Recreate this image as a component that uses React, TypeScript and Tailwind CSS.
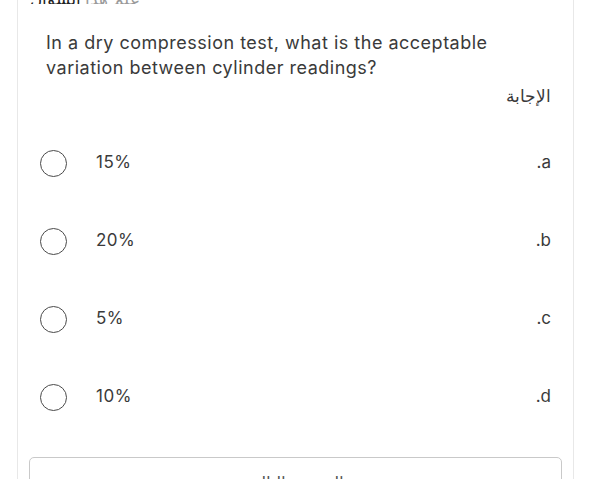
import React from "react";

const options = [
  { label: "15%", letter: ".a" },
  { label: "20%", letter: ".b" },
  { label: "5%", letter: ".c" },
  { label: "10%", letter: ".d" },
];

export default function App() {
  return (
    <div
      className="w-[589px] h-[479px] overflow-hidden bg-white"
      style={{ fontFamily: "Inter, 'Noto Sans', sans-serif" }}
    >
      <div className="ml-[17px] w-[557px] h-[479px] border-x border-[#e8e8e8] flex flex-col">
        <div className="h-[4px] shrink-0 overflow-hidden pl-[12px]">
          <div className="-mt-[10px] text-[17px] leading-[18px] text-[#9a9a9a]" style={{ fontFamily: "'Noto Sans', sans-serif" }}>
            علم هذا <span className="text-[#222]">السؤال</span>
          </div>
        </div>
        <div className="pt-[26px] pl-[28px] pr-[20px] text-[18px] leading-[25px] tracking-[0.5px] text-[#3a3a3a]">
          In a dry compression test, what is the acceptable variation between cylinder readings?
        </div>
        <div
          className="mt-[4px] pr-[22px] text-right text-[17px] leading-[24px] text-[#3a3a3a]"
          dir="rtl"
          style={{ fontFamily: "'Noto Sans', sans-serif" }}
        >
          <span dir="rtl">الإجابة</span>
        </div>
        <div className="mt-[16px] flex flex-col">
          {options.map((o) => (
            <div key={o.letter} className="h-[78px] flex items-center pl-[22px] pr-[22px]">
              <div className="w-[27px] h-[27px] rounded-full border-[1.5px] border-[#4a4a4a]" />
              <div className="ml-[29px] text-[17px] tracking-[0.5px] text-[#3a3a3a]">{o.label}</div>
              <div className="ml-auto text-[17px] text-[#3a3a3a]">{o.letter}</div>
            </div>
          ))}
        </div>
        <div className="mt-[21px] ml-[11px] mr-[11px] h-[60px] shrink-0 rounded-[5px] border border-[#c9c9c9] pt-[12px] text-center text-[17px] text-[#555]" style={{ fontFamily: "'Noto Sans', sans-serif" }}>
          <span dir="rtl">الصفحة التالية</span>
        </div>
      </div>
    </div>
  );
}
